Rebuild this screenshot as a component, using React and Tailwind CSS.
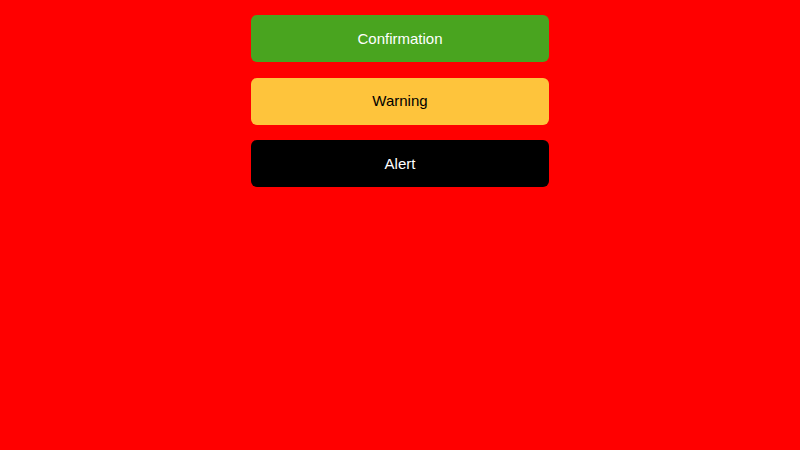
const buttons = [
  { label: 'Confirmation', className: 'bg-[#49a41f] text-white' },
  { label: 'Warning', className: 'bg-[#fec43c] text-black' },
  { label: 'Alert', className: 'bg-black text-white' },
];

export default function App() {
  return (
    <div className="w-[800px] h-[450px] bg-[#ff0000] flex flex-col items-center pt-[15px] gap-[15.5px] font-['Liberation_Sans',Arial,sans-serif]">
      {buttons.map((b) => (
        <button
          key={b.label}
          className={`w-[298px] h-[47px] pt-px rounded-md text-[15px] flex items-center justify-center ${b.className}`}
        >
          {b.label}
        </button>
      ))}
    </div>
  );
}
